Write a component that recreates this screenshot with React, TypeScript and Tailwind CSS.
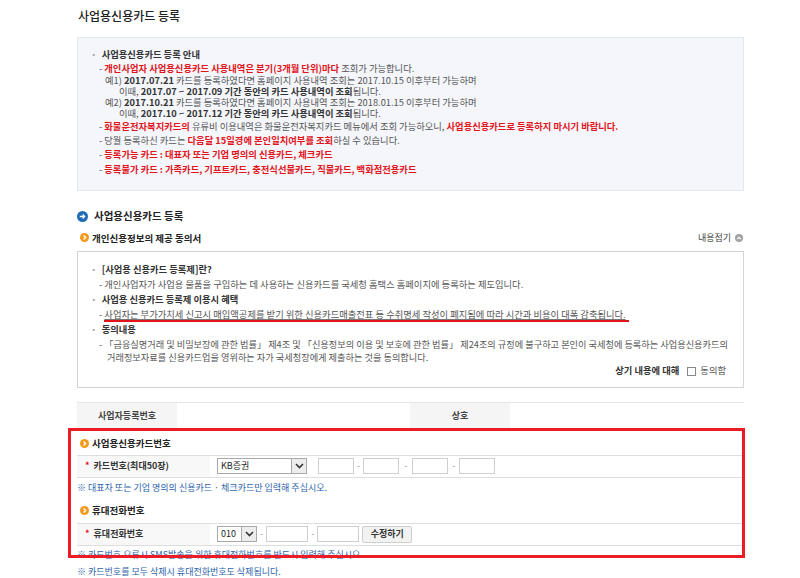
import React from 'react';

const FONT = { fontFamily: '"Noto Sans CJK KR", "Noto Sans", sans-serif' };

const OrangeDot = () => (
  <svg width="9" height="9" viewBox="0 0 10 10" className="shrink-0">
    <circle cx="5" cy="5" r="5" fill="#f39a1c" />
    <path d="M4 2.8L6.2 5L4 7.2" stroke="#fff" strokeWidth="1.5" fill="none" />
  </svg>
);

const BlueDot = () => (
  <svg width="11" height="11" viewBox="0 0 12 12" className="shrink-0">
    <circle cx="6" cy="6" r="6" fill="#1f6cb4" />
    <path d="M3 6h5.2M6.2 3.8L8.4 6L6.2 8.2" stroke="#fff" strokeWidth="1.4" fill="none" />
  </svg>
);

const FoldIcon = () => (
  <svg width="8" height="8" viewBox="0 0 8 8" className="shrink-0">
    <circle cx="4" cy="4" r="4" fill="#a3a3a3" />
    <path d="M2.3 5L4 3.3L5.7 5" stroke="#fff" strokeWidth="1.2" fill="none" />
  </svg>
);

const SelectBox = ({ value, width }: { value: string; width: string }) => (
  <div className={`flex h-[16px] ${width} items-stretch border border-[#a9a9a9] bg-white`}>
    <span className="flex-1 pl-[3px] text-[9px] leading-[14px] text-[#222]">{value}</span>
    <span className="flex w-[15px] items-center justify-center border-l border-[#a9a9a9] bg-[#ededed]">
      <svg width="9" height="6" viewBox="0 0 9 6">
        <path d="M1 1l3.5 3.5L8 1" stroke="#333" strokeWidth="1.6" fill="none" />
      </svg>
    </span>
  </div>
);

const Field = ({ width = 'w-[36px]' }: { width?: string }) => (
  <span className={`inline-block h-[16px] ${width} border border-[#cfcfcf] bg-white`} />
);

const Dash = ({ pad = 'px-[3px]' }: { pad?: string }) => <span className={`${pad} text-[9px] text-[#999]`}>-</span>;

const InfoBox = () => (
  <div className="mt-[14px] whitespace-nowrap border border-[#e3e8ef] bg-[#f4f6fb] pb-[13px] pl-[13px] pt-[9px] text-[9.3px] text-[#555]">
    <div className="h-[15px] leading-[15px] font-semibold text-[#333]">
      <span className="mr-[3px] text-[#888]">·</span> 사업용신용카드 등록 안내
    </div>
    <div className="ml-[8px] h-[13px] leading-[13px]">
      - <b className="text-[#e1141c]">개인사업자 사업용신용카드 사용내역은 분기(3개월 단위)마다</b> 조회가 가능합니다.
    </div>
    <div className="ml-[14px] h-[11px] leading-[11px]">
      예1) <b className="text-[#333]">2017.07.21</b> 카드를 등록하였다면 홈페이지 사용내역 조회는 2017.10.15 이후부터 가능하며
    </div>
    <div className="ml-[28px] h-[11px] leading-[11px]">
      이때, <b className="text-[#333]">2017.07 ~ 2017.09 기간 동안의 카드 사용내역이 조회</b>됩니다.
    </div>
    <div className="ml-[14px] h-[11px] leading-[11px]">
      예2) <b className="text-[#333]">2017.10.21</b> 카드를 등록하였다면 홈페이지 사용내역 조회는 2018.01.15 이후부터 가능하며
    </div>
    <div className="ml-[28px] h-[11px] leading-[11px]">
      이때, <b className="text-[#333]">2017.10 ~ 2017.12 기간 동안의 카드 사용내역이 조회</b>됩니다.
    </div>
    <div className="ml-[8px] h-[14px] leading-[14px]">
      - <b className="text-[#e1141c]">화물운전자복지카드의</b> 유류비 이용내역은 화물운전자복지카드 메뉴에서 조회 가능하오니,{' '}
      <b className="text-[#e1141c]">사업용신용카드로 등록하지 마시기 바랍니다.</b>
    </div>
    <div className="ml-[8px] h-[14px] leading-[14px]">
      - 당월 등록하신 카드는 <b className="text-[#e1141c]">다음달 15일경에 본인일치여부를 조회</b>하실 수 있습니다.
    </div>
    <div className="ml-[8px] h-[15px] leading-[15px]">
      - <b className="text-[#e1141c]">등록가능 카드 : 대표자 또는 기업 명의의 신용카드, 체크카드</b>
    </div>
    <div className="ml-[8px] h-[15px] leading-[15px]">
      - <b className="text-[#e1141c]">등록불가 카드 : 가족카드, 기프트카드, 충전식선불카드, 직불카드, 백화점전용카드</b>
    </div>
  </div>
);

const AgreementBox = () => (
  <div className="mt-[6px] whitespace-nowrap border border-[#d4d4d4] bg-white pb-[8px] pl-[13px] pr-[17px] pt-[10px] text-[9.3px] text-[#555]">
    <div className="h-[15px] leading-[15px] font-semibold text-[#333]">
      <span className="mr-[3px] text-[#888]">·</span> [사업용 신용카드 등록제]란?
    </div>
    <div className="ml-[8px] h-[15px] leading-[15px]">
      - 개인사업자가 사업용 물품을 구입하는 데 사용하는 신용카드를 국세청 홈택스 홈페이지에 등록하는 제도입니다.
    </div>
    <div className="h-[15px] leading-[15px] font-semibold text-[#333]">
      <span className="mr-[3px] text-[#888]">·</span> 사업용 신용카드 등록제 이용시 혜택
    </div>
    <div className="ml-[8px] h-[15px] leading-[14px]">
      -{' '}
      <span className="inline-block border-b-2 border-[#e1141c] pr-[3px] leading-[12px]">
        <span className="underline decoration-[#777] underline-offset-1">
          사업자는 부가가치세 신고시 매입액공제를 받기 위한 신용카드매출전표 등 수취명세 작성이 폐지됨에 따라 시간과 비용이 대폭 감축됩니다.
        </span>
      </span>
    </div>
    <div className="h-[15px] leading-[15px] font-semibold text-[#333]">
      <span className="mr-[3px] text-[#888]">·</span> 동의내용
    </div>
    <div className="ml-[8px] h-[14px] text-[9.2px] leading-[14px]">
      - 「금융실명거래 및 비밀보장에 관한 법률」 제4조 및 「신용정보의 이용 및 보호에 관한 법률」 제24조의 규정에 불구하고 본인이 국세청에 등록하는 사업용신용카드의
    </div>
    <div className="ml-[16px] h-[12px] text-[9.2px] leading-[12px]">
      거래정보자료를 신용카드업을 영위하는 자가 국세청장에게 제출하는 것을 동의합니다.
    </div>
    <div className="mt-[1px] flex h-[15px] items-center justify-end">
      <b className="text-[#333]">상기 내용에 대해</b>
      <span className="ml-[8px] mr-[4px] inline-block h-[9px] w-[9px] border border-[#888] bg-white" />
      <span>동의함</span>
    </div>
  </div>
);

const SubHeader = ({ children, className = '' }: { children: React.ReactNode; className?: string }) => (
  <div className={`flex h-[12px] items-center gap-[3px] pl-[3px] text-[9.5px] font-bold text-[#222] ${className}`}>
    <OrangeDot />
    <span>{children}</span>
  </div>
);

export default function App() {
  return (
    <div className="relative h-[578px] w-[800px] overflow-hidden bg-white" style={FONT}>
      <div className="ml-[77px] w-[667px]">
        <h1 className="pl-[1px] pt-[9px] text-[12px] leading-[14px] font-medium text-[#222]">사업용신용카드 등록</h1>

        <InfoBox />

        <div className="mt-[18px] flex h-[14px] items-center gap-[6px] text-[10.5px] font-bold text-[#222]">
          <BlueDot />
          <span>사업용신용카드 등록</span>
        </div>

        <div className="mt-[8px] flex items-center justify-between">
          <SubHeader>개인신용정보의 제공 동의서</SubHeader>
          <div className="flex items-center gap-[4px] pr-[1px] text-[9px] text-[#444]">
            <span>내용접기</span>
            <FoldIcon />
          </div>
        </div>

        <AgreementBox />

        <div className="mt-[14px] flex h-[28px] border-t border-[#e6e6e6] text-[9px] text-[#444]">
          <div className="flex w-[100px] items-center justify-center bg-[#f5f5f5] font-semibold">사업자등록번호</div>
          <div className="w-[233px]" />
          <div className="flex w-[100px] items-center justify-center bg-[#f5f5f5] font-semibold">상호</div>
          <div className="flex-1" />
        </div>

        <SubHeader className="mt-[8px]">사업용신용카드번호</SubHeader>
        <div className="mt-[5px] flex h-[23px] border-y border-[#dedede] text-[9px]">
          <div className="flex w-[133px] items-center bg-[#f8f8f8] pl-[8px] font-semibold text-[#333]">
            <span className="mr-[4px] text-[#e1141c]">*</span>카드번호(최대50장)
          </div>
          <div className="flex items-center pl-[7px]">
            <SelectBox value="KB증권" width="w-[90px]" />
            <span className="w-[11px]" />
            <Field />
            <Dash />
            <Field />
            <Dash pad="px-[5px]" />
            <Field />
            <Dash pad="px-[4px]" />
            <Field />
          </div>
        </div>
        <div className="mt-[4px] h-[12px] text-[9px] leading-[12px] text-[#2d64ac]">
          ※ 대표자 또는 기업 명의의 신용카드 · 체크카드만 입력해 주십시오.
        </div>

        <SubHeader className="mt-[11px]">휴대전화번호</SubHeader>
        <div className="mt-[6px] flex h-[23px] border-y border-[#dedede] text-[9px]">
          <div className="flex w-[133px] items-center bg-[#f8f8f8] pl-[8px] font-semibold text-[#333]">
            <span className="mr-[4px] text-[#e1141c]">*</span>휴대전화번호
          </div>
          <div className="flex items-center pl-[7px]">
            <SelectBox value="010" width="w-[40px]" />
            <Dash />
            <Field width="w-[42px]" />
            <Dash />
            <Field width="w-[42px]" />
            <button
              type="button"
              className="ml-[3px] h-[17px] w-[50px] rounded-[2px] border border-[#cfcfcf] bg-[#f2f2f2] text-[9px] font-semibold text-[#333]"
            >
              수정하기
            </button>
          </div>
        </div>
        <div className="mt-[3px] h-[12px] text-[9px] leading-[12px] text-[#2d64ac]">
          ※ 카드번호 오류시 SMS발송을 위한 휴대전화번호를 반드시 입력해 주십시오.
        </div>
        <div className="mt-[5px] h-[12px] text-[9px] leading-[12px] text-[#2d64ac]">
          ※ 카드번호를 모두 삭제시 휴대전화번호도 삭제됩니다.
        </div>
      </div>

      {/* highlight frame laid over the card/phone section */}
      <div className="pointer-events-none absolute left-[68px] top-[428px] h-[130px] w-[677px] border-[3px] border-[#ec1c24]" />
    </div>
  );
}
